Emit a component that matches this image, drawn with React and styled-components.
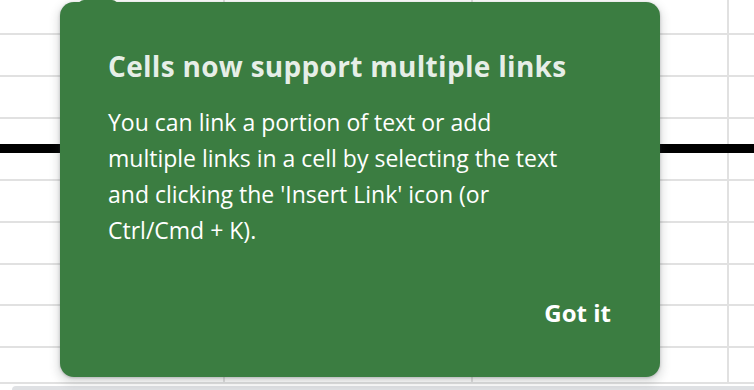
import styled, {createGlobalStyle} from "styled-components";

const GlobalStyle = createGlobalStyle`
  html, body {
    margin: 0;
    padding: 0;
    background: #fff;
  }
  body {
    font-family: "Open Sans", "Liberation Sans", sans-serif;
  }
`;

const Sheet = styled.div`
  position: relative;
  width: 754px;
  height: 390px;
  overflow: hidden;
  background: #fff;
  display: flex;
  flex-direction: column;
`;

const Row = styled.div`
  display: grid;
  grid-template-columns: 223px 246px 254px 1fr;
  column-gap: 2px;
  background: #e1e1e1;
  height: ${(p) => p.$h}px;
  border-bottom: ${(p) => (p.$thick ? "9px solid #000" : "2px solid #e1e1e1")};
  flex-shrink: 0;
`;

const Cell = styled.div`
  background: #fff;
`;

const Gap = styled.div`
  height: 2px;
  flex-shrink: 0;
`;

const TabBar = styled.div`
  flex: 1;
  margin-left: 12px;
  background: #dfe1e4;
  border-radius: 8px 0 0 0;
`;

const Callout = styled.div`
  position: absolute;
  left: 60px;
  top: 2px;
  width: 600px;
  height: 375px;
  box-sizing: border-box;
  padding: 46px 49px 0 48px;
  background: #3b7d41;
  border-radius: 14px;
  box-shadow: 0 1px 3px rgba(60, 64, 67, 0.3), 0 4px 8px 3px rgba(60, 64, 67, 0.15);
  display: flex;
  flex-direction: column;
  color: #fff;

  &::before {
    content: "";
    position: absolute;
    left: 18px;
    top: -2px;
    width: 40px;
    height: 12px;
    background: #3b7d41;
    border-radius: 6px 6px 0 0;
  }
`;

const Title = styled.h2`
  margin: 0;
  font-size: 28px;
  line-height: 36px;
  font-weight: 700;
  color: rgba(255, 255, 255, 0.88);
  letter-spacing: 0.3px;
  white-space: nowrap;
`;

const Body = styled.p`
  margin: 20px 0 0;
  max-width: 455px;
  font-size: 23px;
  line-height: 36px;
  font-weight: 400;
  color: #fff;
`;

const Actions = styled.div`
  display: flex;
  justify-content: flex-end;
  margin-top: 47px;
`;

const TextButton = styled.button`
  border: none;
  background: none;
  padding: 0;
  font-family: inherit;
  font-size: 24px;
  line-height: 36px;
  font-weight: 700;
  color: #fff;
  cursor: pointer;
`;

const rows = [
  {h: 33},
  {h: 40},
  {h: 40},
  {h: 25, thick: true},
  {h: 26},
  {h: 40},
  {h: 40},
  {h: 39},
  {h: 40},
  {h: 34},
];

const App = () => {
  return (
    <>
      <GlobalStyle/>
      <Sheet>
        {rows.map((r, i) => (
          <Row key={i} $h={r.h} $thick={r.thick}>
            <Cell/>
            <Cell/>
            <Cell/>
            <Cell/>
          </Row>
        ))}
        <Gap/>
        <TabBar/>

        <Callout>
          <Title>Cells now support multiple links</Title>
          <Body>
            You can link a portion of text or add multiple links in a cell by selecting the text and clicking the
            'Insert Link' icon (or Ctrl/Cmd + K).
          </Body>
          <Actions>
            <TextButton>Got it</TextButton>
          </Actions>
        </Callout>
      </Sheet>
    </>
  );
};

export default App;
